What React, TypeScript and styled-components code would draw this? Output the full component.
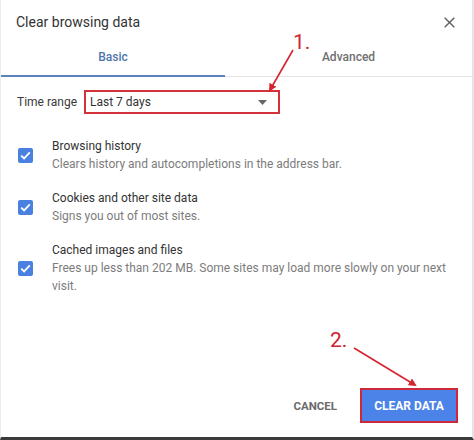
import React from "react";
import styled, { createGlobalStyle } from "styled-components";

const GlobalStyle = createGlobalStyle`
  html, body {
    margin: 0;
    padding: 0;
    background: #ffffff;
  }
  body {
    font-family: Roboto, "Liberation Sans", Arial, sans-serif;
  }
`;

const Dialog = styled.div`
  position: relative;
  width: 474px;
  height: 440px;
  box-sizing: border-box;
  display: flex;
  flex-direction: column;
  background: #fff;
  border-left: 1px solid #ececec;
  border-right: 2px solid #e4e4e4;
  border-bottom: 3px solid #3b3b3b;
  overflow: hidden;
`;

const Header = styled.div`
  height: 44px;
  display: flex;
  align-items: center;
  justify-content: space-between;
  padding: 0 13px 0 15px;
`;

const Title = styled.h1`
  margin: 0;
  font-size: 14px;
  font-weight: 400;
  color: #333;
`;

const CloseButton = styled.button`
  border: 0;
  background: none;
  padding: 4px;
  display: flex;
  cursor: pointer;
`;

const TabBar = styled.div`
  display: flex;
  height: 32px;
  border-bottom: 1px solid #e3e3e3;
`;

const Tab = styled.div<{ $active?: boolean; $width?: number }>`
  flex: ${({ $width }) => ($width ? `0 0 ${$width}px` : "1")};
  height: 33px;
  margin-bottom: -1px;
  box-sizing: border-box;
  padding-bottom: 5px;
  display: flex;
  align-items: center;
  justify-content: center;
  font-size: 12px;
  font-weight: 500;
  color: ${({ $active }) => ($active ? "#5076ad" : "#707070")};
  border-bottom: 2px solid ${({ $active }) => ($active ? "#5a82bd" : "transparent")};
`;

const RangeRow = styled.div`
  display: flex;
  align-items: center;
  gap: 7px;
  padding: 13px 0 0 16px;
`;

const Label = styled.span`
  font-size: 12px;
  color: #3a3a3a;
`;

const Select = styled.div`
  width: 196px;
  height: 24px;
  box-sizing: border-box;
  border: 2px solid #d3313b;
  display: flex;
  align-items: center;
  justify-content: space-between;
  padding: 0 11px 0 4px;
  font-size: 12px;
  color: #333;
`;

const CheckList = styled.div`
  display: flex;
  flex-direction: column;
  gap: 16px;
  padding: 23px 16px 0 17px;
`;

const CheckRow = styled.div`
  display: flex;
  align-items: center;
  gap: 19px;
`;

const Box = styled.span`
  flex: none;
  width: 15px;
  height: 15px;
  border-radius: 2px;
  background: #4a80e0;
  display: flex;
  align-items: center;
  justify-content: center;
`;

const CheckText = styled.div`
  display: flex;
  flex-direction: column;
  font-size: 12px;
  line-height: 18px;
  padding-right: 4px;
`;

const ItemTitle = styled.span`
  color: #333;
`;

const ItemSub = styled.span`
  color: #7c7c7c;
`;

const Footer = styled.div`
  margin-top: auto;
  display: flex;
  justify-content: flex-end;
  align-items: center;
  gap: 7px;
  padding: 0 14px 14px 0;
`;

const TextButton = styled.button`
  border: 0;
  background: none;
  font-family: inherit;
  font-size: 11.5px;
  font-weight: 700;
  color: #6a6a6a;
  padding: 0 16px;
  height: 35px;
`;

const PrimaryButton = styled.button`
  border: 2px solid #cc2a3a;
  background: #4c83e8;
  color: #fff;
  font-family: inherit;
  font-size: 12px;
  font-weight: 700;
  width: 98px;
  height: 35px;
  box-sizing: border-box;
`;

const Overlay = styled.svg`
  position: absolute;
  left: 0;
  top: 0;
  pointer-events: none;
`;

const Step = styled.span<{ $x: number; $y: number }>`
  position: absolute;
  left: ${({ $x }) => $x}px;
  top: ${({ $y }) => $y}px;
  font-size: 21px;
  line-height: 21px;
  color: #cf2330;
`;

const items = [
  {
    title: "Browsing history",
    sub: ["Clears history and autocompletions in the address bar."],
  },
  { title: "Cookies and other site data", sub: ["Signs you out of most sites."] },
  {
    title: "Cached images and files",
    sub: ["Frees up less than 202 MB. Some sites may load more slowly on your next visit."],
  },
];

const Check = () => (
  <svg width="11" height="9" viewBox="0 0 11 9">
    <path d="M1.2 4.6 L4.1 7.4 L9.8 1.4" fill="none" stroke="#fff" strokeWidth="1.8" />
  </svg>
);

export default function App() {
  return (
    <>
      <GlobalStyle />
      <Dialog>
        <Header>
          <Title>Clear browsing data</Title>
          <CloseButton aria-label="Close">
            <svg width="11" height="11" viewBox="0 0 11 11">
              <path d="M0.7 0.7 L10.3 10.3 M10.3 0.7 L0.7 10.3" stroke="#5f5f5f" strokeWidth="1.4" />
            </svg>
          </CloseButton>
        </Header>
        <TabBar>
          <Tab $active $width={224}>Basic</Tab>
          <Tab>Advanced</Tab>
        </TabBar>
        <RangeRow>
          <Label>Time range</Label>
          <Select>
            Last 7 days
            <svg width="9" height="5" viewBox="0 0 9 5">
              <path d="M0 0 L9 0 L4.5 5 Z" fill="#666" />
            </svg>
          </Select>
        </RangeRow>
        <CheckList>
          {items.map((it) => (
            <CheckRow key={it.title}>
              <Box>
                <Check />
              </Box>
              <CheckText>
                <ItemTitle>{it.title}</ItemTitle>
                {it.sub.map((s) => (
                  <ItemSub key={s}>{s}</ItemSub>
                ))}
              </CheckText>
            </CheckRow>
          ))}
        </CheckList>
        <Footer>
          <TextButton>CANCEL</TextButton>
          <PrimaryButton>CLEAR DATA</PrimaryButton>
        </Footer>

        <Step $x={292} $y={32}>1.</Step>
        <Step $x={329} $y={330}>2.</Step>
        <Overlay width="474" height="440" viewBox="0 0 474 440">
          <defs>
            <marker id="head" markerWidth="8" markerHeight="8" refX="6" refY="4" orient="auto" markerUnits="userSpaceOnUse">
              <path d="M0 0 L8 4 L0 8 Z" fill="#d6232e" />
            </marker>
          </defs>
          <line x1="292" y1="50" x2="269" y2="90" stroke="#d6232e" strokeWidth="1.6" markerEnd="url(#head)" />
          <line x1="353" y1="348" x2="414" y2="385" stroke="#d6232e" strokeWidth="1.6" markerEnd="url(#head)" />
        </Overlay>
      </Dialog>
    </>
  );
}
